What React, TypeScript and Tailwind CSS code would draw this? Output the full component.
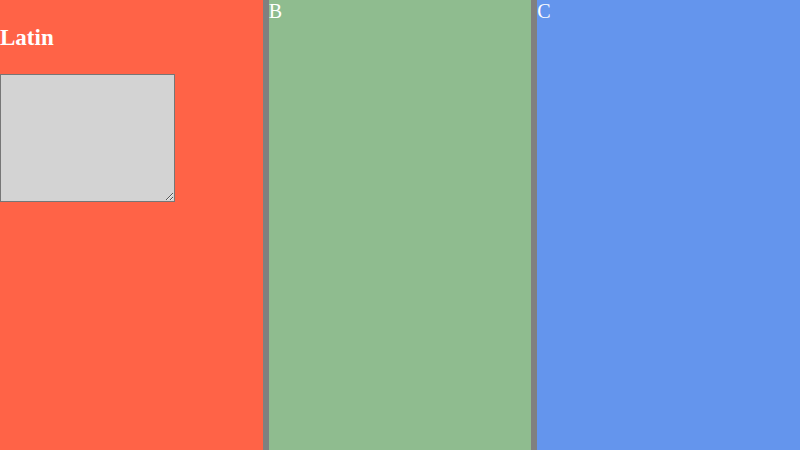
import React from "react";

export default function App() {
  return (
    <div
      className="flex h-[450px] w-[800px] gap-[6px] bg-[#808080] text-white"
      style={{ fontFamily: '"Liberation Serif", serif' }}
    >
      <div className="flex flex-1 flex-col bg-[#ff6347]">
        <h2 className="mt-[24px] text-[23px] font-bold leading-[27px]">Latin</h2>
        <textarea className="mt-[23px] h-[128px] w-[175px] resize border border-[#767676] bg-[#d3d3d3]" />
      </div>
      <div className="flex-1 bg-[#8fbc8f] text-[20px] leading-[23px]">B</div>
      <div className="flex-1 bg-[#6495ed] text-[20px] leading-[23px]">C</div>
    </div>
  );
}
